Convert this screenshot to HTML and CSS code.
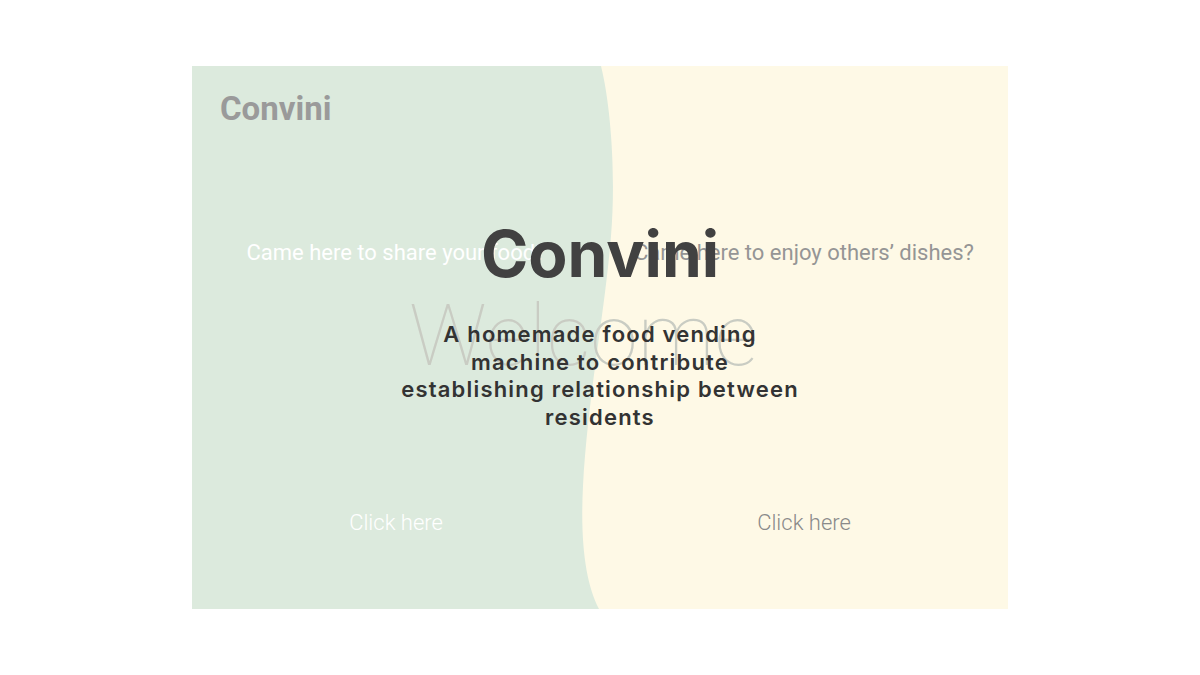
FILE: index.html
```html
<!DOCTYPE html>
<html lang="en">
<head>
<meta charset="utf-8">
<title>Convini</title>
<link rel="stylesheet" href="styles.css">
</head>
<body>
<main class="frame">
  <svg class="wave" viewBox="0 0 816 543" preserveAspectRatio="none" aria-hidden="true">
    <path d="M0,0 L409,0 C419,40 424,110 419,170 C413,245 396,330 391,420 C388,478 394,518 407,543 L0,543 Z" fill="#dceadd"/>
  </svg>
  <div class="logo">Convini</div>
  <div class="sides">
    <p class="ask ask-left">Came here to share your food?</p>
    <p class="ask ask-right">Came here to enjoy others’ dishes?</p>
    <a class="click click-left" href="#">Click here</a>
    <a class="click click-right" href="#">Click here</a>
  </div>
  <div class="center">
    <div class="welcome">Welcome</div>
    <h1 class="title">Convini</h1>
    <p class="tagline">A homemade food vending<br>machine to contribute<br>establishing relationship between<br>residents</p>
  </div>
</main>
</body>
</html>
```
FILE: styles.css
```css
html, body {
  margin: 0;
  padding: 0;
  background: #ffffff;
}

.frame {
  position: relative;
  box-sizing: border-box;
  width: 816px;
  height: 543px;
  margin: 66px auto 0;
  padding-top: 26px;
  background: #fef9e6;
  overflow: hidden;
  display: flex;
  flex-direction: column;
  font-family: Roboto, "Liberation Sans", sans-serif;
}

.wave {
  position: absolute;
  left: 0;
  top: 0;
  width: 816px;
  height: 543px;
  z-index: 0;
}

.logo {
  position: relative;
  z-index: 1;
  margin-left: 28px;
  font-size: 33px;
  line-height: 1;
  font-weight: 700;
  color: #9a9a9a;
}

.sides {
  position: relative;
  z-index: 1;
  display: grid;
  grid-template-columns: 1fr 1fr;
  row-gap: 248px;
  margin-top: 116.5px;
}

.ask {
  margin: 0;
  text-align: center;
  font-size: 22px;
  line-height: 1;
  font-weight: 400;
}

.ask-left { color: #ffffff; }
.ask-right { color: #959595; }

.click {
  text-align: center;
  font-size: 22px;
  line-height: 1;
  font-weight: 300;
  text-decoration: none;
}

.click-left { color: #ffffff; }
.click-right { color: #8a8a8a; }

.center {
  position: absolute;
  left: 0;
  top: 0;
  width: 100%;
  height: 100%;
  z-index: 2;
  box-sizing: border-box;
  padding-top: 156px;
  display: flex;
  flex-direction: column;
  align-items: center;
  pointer-events: none;
}

.welcome {
  position: absolute;
  left: 217px;
  top: 226.5px;
  font-family: Roboto, sans-serif;
  font-weight: 100;
  font-size: 86px;
  line-height: 1;
  color: #c9ccc3;
  z-index: -1;
}

.title {
  margin: 0;
  font-family: Inter, "Open Sans", sans-serif;
  font-weight: 700;
  font-size: 64px;
  line-height: 1;
  color: #414141;
}

.tagline {
  margin: 35px 0 0;
  text-align: center;
  font-family: Inter, "Open Sans", sans-serif;
  font-weight: 600;
  font-size: 22px;
  line-height: 27.5px;
  letter-spacing: 1.2px;
  color: #333333;
}
```
